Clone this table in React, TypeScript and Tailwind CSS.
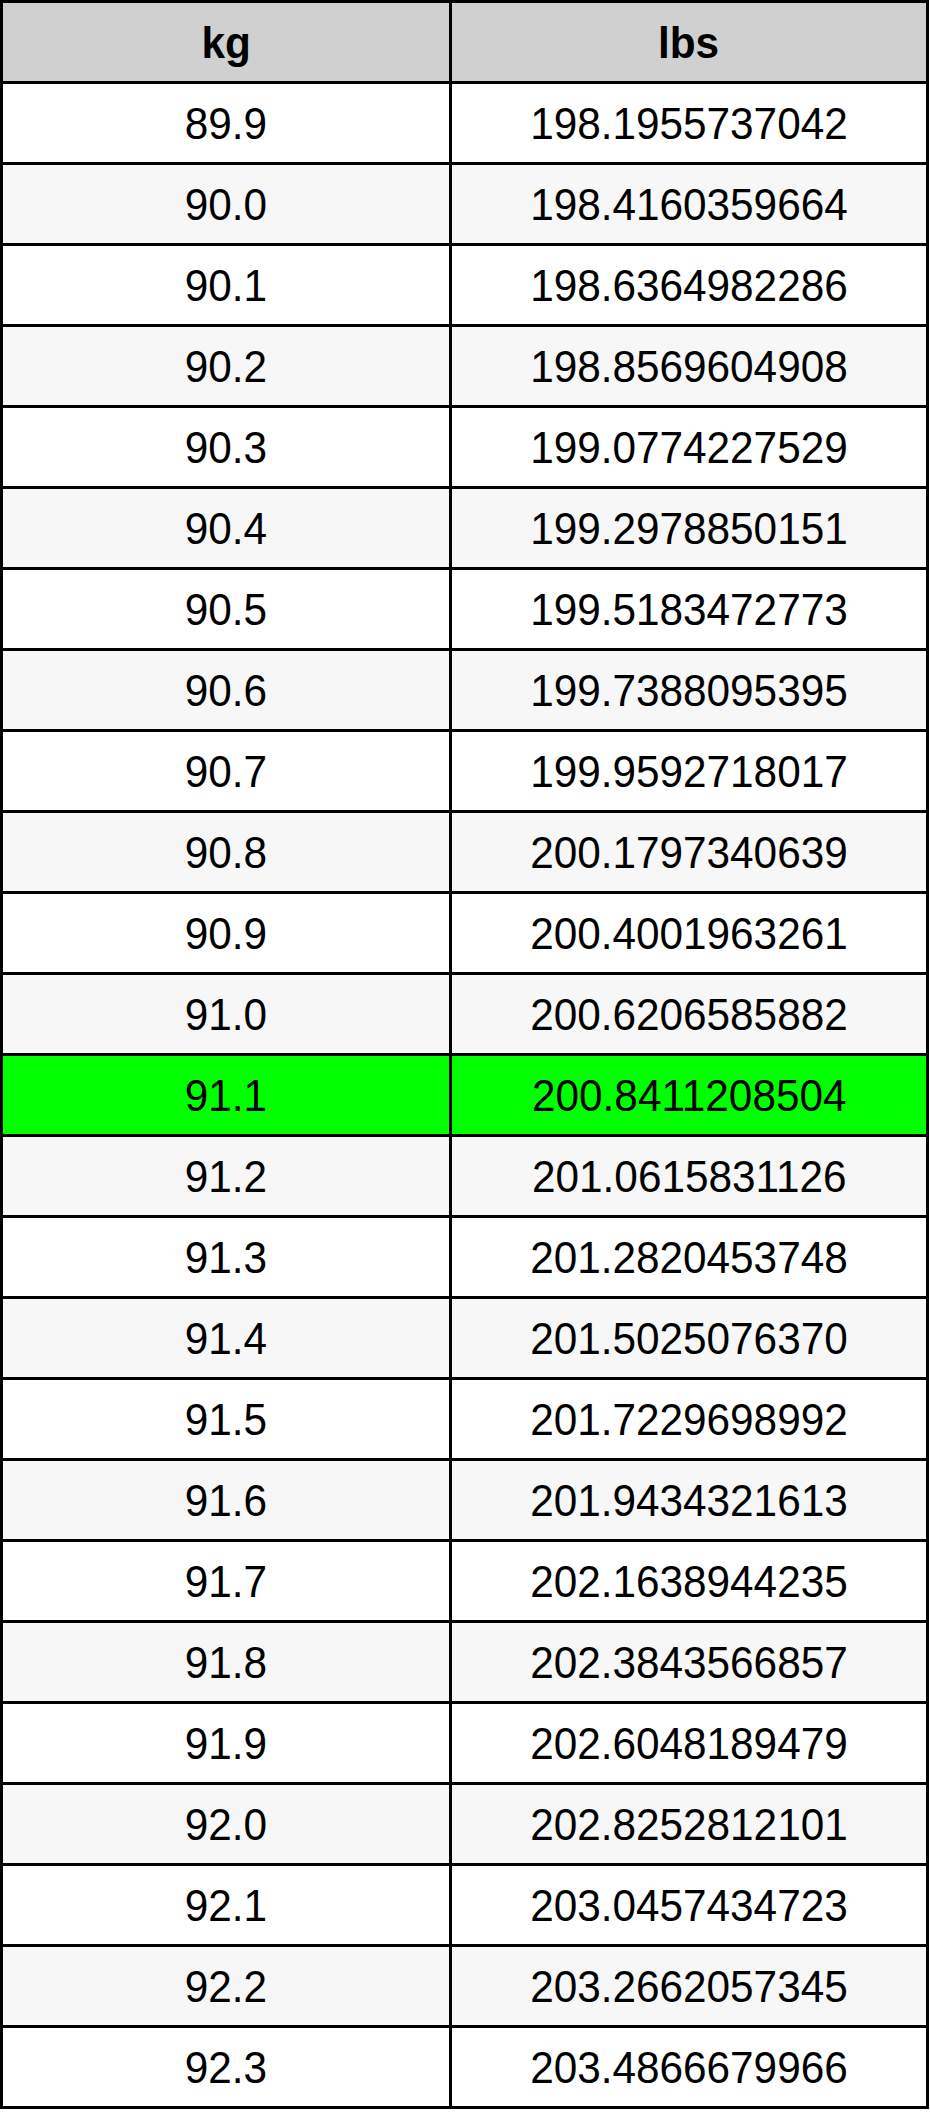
const rows: [string, string][] = [
  ["89.9", "198.1955737042"],
  ["90.0", "198.4160359664"],
  ["90.1", "198.6364982286"],
  ["90.2", "198.8569604908"],
  ["90.3", "199.0774227529"],
  ["90.4", "199.2978850151"],
  ["90.5", "199.5183472773"],
  ["90.6", "199.7388095395"],
  ["90.7", "199.9592718017"],
  ["90.8", "200.1797340639"],
  ["90.9", "200.4001963261"],
  ["91.0", "200.6206585882"],
  ["91.1", "200.8411208504"],
  ["91.2", "201.0615831126"],
  ["91.3", "201.2820453748"],
  ["91.4", "201.5025076370"],
  ["91.5", "201.7229698992"],
  ["91.6", "201.9434321613"],
  ["91.7", "202.1638944235"],
  ["91.8", "202.3843566857"],
  ["91.9", "202.6048189479"],
  ["92.0", "202.8252812101"],
  ["92.1", "203.0457434723"],
  ["92.2", "203.2662057345"],
  ["92.3", "203.4866679966"],
];

const HIGHLIGHT = "91.1";

function Cell({ text, bg, bold }: { text: string; bg: string; bold?: boolean }) {
  return (
    <div className={`flex h-[78px] items-center justify-center ${bg}`}>
      <span
        className={`inline-block scale-x-[0.94] text-[45px] leading-none text-black ${bold ? "font-bold" : ""}`}
      >
        {text}
      </span>
    </div>
  );
}

export default function App() {
  return (
    <div className="min-h-screen bg-white" style={{ fontFamily: '"Liberation Sans", Arial, sans-serif' }}>
      <div className="grid w-[929px] grid-cols-[446px_474px] gap-[3px] bg-black p-[3px]">
        <Cell text="kg" bg="bg-[#d0d0d0]" bold />
        <Cell text="lbs" bg="bg-[#d0d0d0]" bold />
        {rows.map(([kg, lbs], i) => {
          const bg = kg === HIGHLIGHT ? "bg-[#00ff00]" : i % 2 === 0 ? "bg-white" : "bg-[#f7f7f7]";
          return [
            <Cell key={kg + "-kg"} text={kg} bg={bg} />,
            <Cell key={kg + "-lbs"} text={lbs} bg={bg} />,
          ];
        })}
      </div>
    </div>
  );
}
